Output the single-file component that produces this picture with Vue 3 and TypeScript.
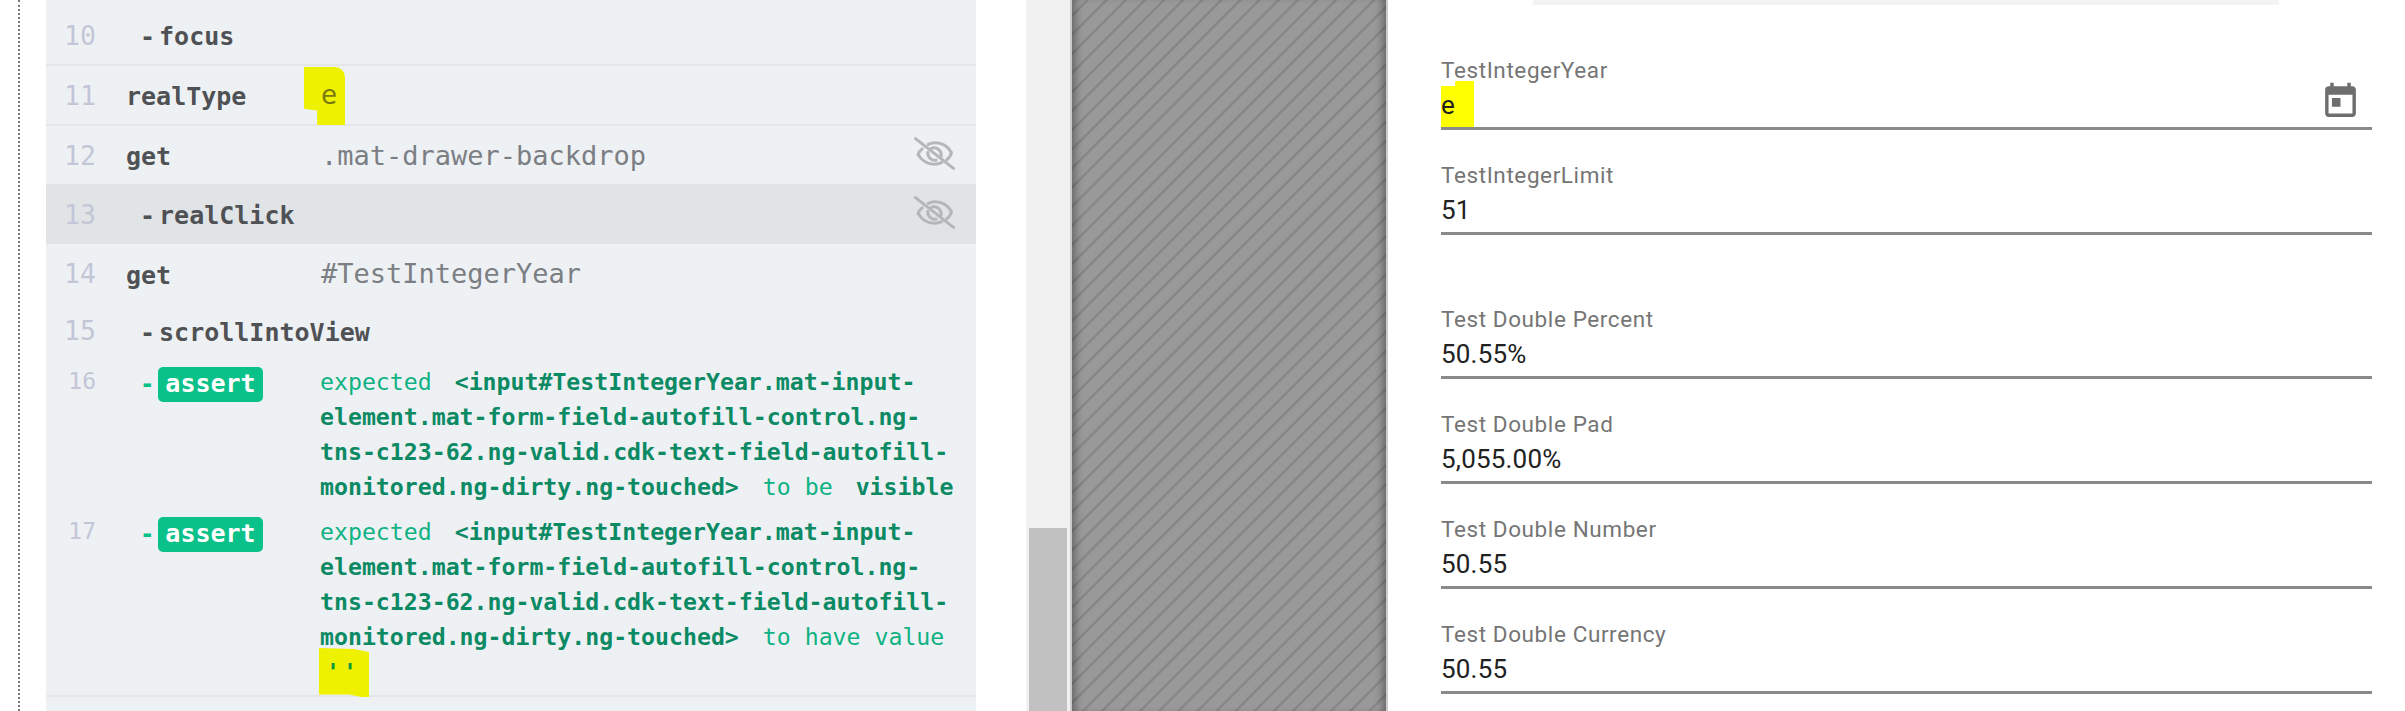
<script setup lang="ts">
interface Field { label: string; value: string; mark?: boolean; icon?: boolean; spaced?: boolean }
const fields: Field[] = [
  { label: 'TestIntegerYear', value: 'e', mark: true, icon: true },
  { label: 'TestIntegerLimit', value: '51' },
  { label: 'Test Double Percent', value: '50.55%', spaced: true },
  { label: 'Test Double Pad', value: '5,055.00%' },
  { label: 'Test Double Number', value: '50.55' },
  { label: 'Test Double Currency', value: '50.55' },
]
const line2 = 'element.mat-form-field-autofill-control.ng-'
const line3 = 'tns-c123-62.ng-valid.cdk-text-field-autofill-'
const line4 = 'monitored.ng-dirty.ng-touched>'
</script>

<template>
  <div class="page">
    <div class="gutter"><div class="dots"></div></div>
    <section class="log">
      <div class="row first line"><span class="num">10</span><span class="cmd child"><i>-</i>focus</span></div>
      <div class="row h60 line">
        <span class="num">11</span><span class="cmd">realType</span>
        <span class="msg"><span class="hl hl-e">e</span></span>
      </div>
      <div class="row h58">
        <span class="num">12</span><span class="cmd">get</span><span class="msg">.mat-drawer-backdrop</span>
        <svg class="eye" viewBox="0 0 40 32"><use href="#eye-off" /></svg>
      </div>
      <div class="row h60 active">
        <span class="num">13</span><span class="cmd child"><i>-</i>realClick</span>
        <svg class="eye" viewBox="0 0 40 32"><use href="#eye-off" /></svg>
      </div>
      <div class="row h59">
        <span class="num">14</span><span class="cmd">get</span><span class="msg">#TestIntegerYear</span>
      </div>
      <div class="row h55">
        <span class="num">15</span><span class="cmd child"><i>-</i>scrollIntoView</span>
      </div>
      <div class="assert">
        <span class="num small">16</span>
        <span class="dash">-</span><span class="badge">assert</span>
        <div class="text">
          <div>expected<b class="gapped">&lt;input#TestIntegerYear.mat-input-</b></div>
          <div><b>{{ line2 }}</b></div>
          <div><b>{{ line3 }}</b></div>
          <div><b>{{ line4 }}</b><span class="after">to be</span><b class="gapped">visible</b></div>
        </div>
      </div>
      <div class="assert last">
        <span class="num small">17</span>
        <span class="dash">-</span><span class="badge">assert</span>
        <div class="text">
          <div>expected<b class="gapped">&lt;input#TestIntegerYear.mat-input-</b></div>
          <div><b>{{ line2 }}</b></div>
          <div><b>{{ line3 }}</b></div>
          <div><b>{{ line4 }}</b><span class="after">to have value</span></div>
          <div><b class="hl hl-q">''</b></div>
        </div>
      </div>
    </section>
    <div class="gap"></div>
    <div class="scrollbar"><div class="thumb"></div></div>
    <div class="hatch"></div>
    <main class="form">
      <div class="topbar"></div>
      <div v-for="f in fields" :key="f.label" class="field" :class="{ spaced: f.spaced }">
        <label>{{ f.label }}</label>
        <div class="value">
          <span :class="{ mark: f.mark }">{{ f.value }}</span>
          <svg v-if="f.icon" class="cal" viewBox="0 0 24 24"><path d="M19 3h-1V1h-2v2H8V1H6v2H5c-1.11 0-1.99.9-1.99 2L3 19c0 1.1.89 2 2 2h14c1.1 0 2-.9 2-2V5c0-1.100-.9-2-2-2zm0 16H5V8h14v11zM7 10h5v5H7z"/></svg>
        </div>
      </div>
    </main>
    <svg width="0" height="0" class="defs">
      <symbol id="eye-off" viewBox="0 0 40 32">
        <g fill="none" stroke="currentColor" stroke-width="3" stroke-linecap="round">
          <path d="M14 7C16 6 18 5.500 20.500 5.500C28 5.500 33.500 9.500 36.500 15C36 17.500 34 20.500 32 22" />
          <path d="M8 11.500C6 13 4.500 15 4 17C7 22.500 13 26.500 20 26.500C22.500 26.500 25 26 27 25" />
          <path d="M17 11A7 7 0 0 1 26.500 18.500" />
          <path d="M13.500 15A7 7 0 0 0 21.500 22.500" />
          <path d="M1.500 1.500 38.500 30.500" />
        </g>
      </symbol>
    </svg>
  </div>
</template>

<style>
html, body { margin: 0; background: #fff; overflow: hidden; }
</style>

<style scoped>
.page { width: 2405px; height: 711px; display: flex; overflow: hidden; background: #fff; }
.defs { position: absolute; }
.gutter { width: 46px; flex: none; }
.dots { width: 0; height: 100%; margin-left: 18px; border-left: 2px dotted #777; }
.log { width: 930px; flex: none; height: 711px; background: #eef1f4; font-family: "DejaVu Sans Mono", monospace; overflow: hidden; }
.row { display: flex; align-items: center; position: relative; box-sizing: border-box; }
.first { height: 66px; padding-top: 6px; }
.h60 { height: 60px; }
.h59 { height: 59px; }
.h58 { height: 58px; }
.h55 { height: 55px; }
.line { border-bottom: 2px solid #e4e6e8; }
.active { background: #e0e4e6; }
.num { width: 50px; margin-right: 30px; text-align: right; color: #c3c6d6; font-size: 26.5px; flex: none; }
.num.small { font-size: 23px; }
.cmd { width: 195px; flex: none; font-weight: 700; color: #4f5155; font-size: 25px; padding-top: 3px; white-space: nowrap; }
.cmd.child i { font-style: normal; margin-left: 14px; margin-right: 4px; }
.msg { font-size: 27px; color: #7b7e83; }
.eye { position: absolute; left: 868px; top: 50%; width: 41px; height: 33px; margin-top: -18px; color: #b4b7b9; }
.assert { display: flex; align-items: flex-start; padding-top: 6px; }
.assert .num { line-height: 35px; }
.dash { color: #0ac18a; font-weight: 700; font-size: 24px; margin: 3px 0 0 14px; width: 18px; line-height: 35px; flex: none; }
.badge { background: #0ac18a; color: #fff; font-weight: 700; font-size: 25px; width: 105px; height: 35px; margin-top: 3px; line-height: 33px; border-radius: 5px; text-align: center; flex: none; }
.text { margin-left: 57px; width: 640px; font-size: 23.2px; line-height: 35px; color: #0fb283; white-space: nowrap; }
.text b { color: #0b8a64; }
.gapped { margin-left: 23px; }
.after { margin-left: 24px; }
.assert + .assert { padding-top: 10px; }
.last { height: 181px; border-bottom: 2px solid #e4e6e8; }
.hl { display: inline-block; position: relative; isolation: isolate; }
.hl::before { content: ""; position: absolute; z-index: -1; background: #eef200; }
.hl-e { line-height: 32px; color: #7a7a10; }
.hl-e::before { left: -17px; top: -12px; width: 41px; height: 58px; border-radius: 0 10px 0 0; clip-path: polygon(0 0, 100% 0, 100% 100%, 32% 100%, 32% 75%, 0 72%); }
.text .hl-q { padding-left: 6px; letter-spacing: 3px; color: #0a9a3a; }
.hl-q::before { left: -1px; top: -6px; width: 50px; height: 49px; clip-path: polygon(0 0, 70% 2%, 100% 8%, 100% 100%, 85% 100%, 60% 95%, 0 95%); }
.gap { width: 50px; flex: none; }
.scrollbar { width: 38px; padding: 0 3px; background: #f1f1f1; flex: none; display: flex; flex-direction: column; justify-content: flex-end; }
.thumb { height: 183px; background: #c1c1c1; }
.hatch { width: 318px; flex: none; box-sizing: border-box; border: solid #ccc; border-width: 0 2px; background: repeating-linear-gradient(-45deg, #999 0 10px, #878787 11px 12.5px, #999 13.500px); box-shadow: inset 9px 0 8px -6px rgba(0,0,0,.35), inset -9px 0 8px -6px rgba(0,0,0,.35); }
.form { margin-left: 53px; width: 931px; flex: none; font-family: Roboto, sans-serif; }
.topbar { width: 746px; height: 5px; margin: 0 0 20px 92px; background: #f3f3f3; }
.field { height: 105px; display: flex; flex-direction: column; justify-content: flex-end; }
.spaced { margin-top: 39px; }
.field label { display: block; font-size: 22.5px; line-height: 24px; letter-spacing: .6px; color: #757575; margin-bottom: 7px; }
.value { font-size: 26px; line-height: 32px; letter-spacing: .2px; color: #212121; border-bottom: 3px solid #8a8a8a; padding-bottom: 6px; position: relative; height: 32px; }
.mark { display: inline-block; position: relative; isolation: isolate; }
.mark::before { content: ""; position: absolute; z-index: -1; left: 0; top: -8px; width: 33px; height: 46px; background: #ff0; clip-path: polygon(0 11%, 43% 11%, 43% 0, 100% 0, 100% 100%, 0 100%); }
.cal { position: absolute; right: 11px; bottom: 5px; width: 41px; height: 41px; fill: #6e6e6e; }
</style>
